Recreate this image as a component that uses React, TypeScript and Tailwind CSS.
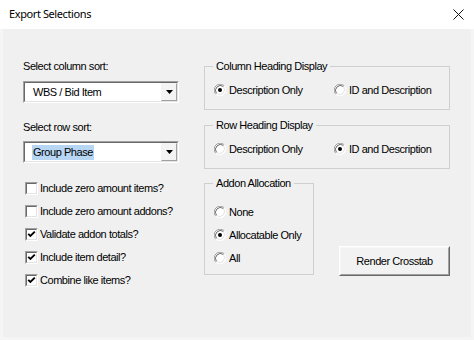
import React from "react";

function Radio({ checked }: { checked?: boolean }) {
  return (
    <svg width="12" height="12" viewBox="0 0 12 12" className="shrink-0">
      <circle cx="6" cy="6" r="5.5" fill="#ffffff" />
      <path d="M10.24 1.76 A6 6 0 0 0 1.76 10.24" stroke="#a0a0a0" strokeWidth="1" fill="none" />
      <path d="M9.5 2.5 A5 5 0 0 0 2.5 9.5" stroke="#696969" strokeWidth="1" fill="none" />
      <path d="M1.76 10.24 A6 6 0 0 0 10.24 1.76" stroke="#ffffff" strokeWidth="1" fill="none" />
      <path d="M2.5 9.5 A5 5 0 0 0 9.5 2.5" stroke="#e3e3e3" strokeWidth="1" fill="none" />
      {checked && <circle cx="6" cy="6" r="2" fill="#000000" />}
    </svg>
  );
}

function Checkbox({ checked }: { checked?: boolean }) {
  return (
    <div className="w-[13px] h-[13px] shrink-0 border border-t-[#a0a0a0] border-l-[#a0a0a0] border-b-white border-r-white">
      <div className="w-full h-full bg-white border border-t-[#696969] border-l-[#696969] border-b-[#e3e3e3] border-r-[#e3e3e3] flex items-center justify-center">
        {checked && (
          <svg width="9" height="9" viewBox="0 0 9 9">
            <path d="M1.2 3.8 L3.4 6 L7.8 1.6" stroke="#000" strokeWidth="1.9" fill="none" />
          </svg>
        )}
      </div>
    </div>
  );
}

function Combo({ value, selected }: { value: string; selected?: boolean }) {
  return (
    <div className="w-[156px] h-[22px] border border-t-[#a0a0a0] border-l-[#a0a0a0] border-b-white border-r-white">
      <div className="w-full h-full bg-white border border-t-[#696969] border-l-[#696969] border-b-[#e3e3e3] border-r-[#e3e3e3] flex items-center justify-between">
        <span className={"ml-[7px] px-[1px] leading-[15px] whitespace-nowrap " + (selected ? "bg-[#b7d6f3]" : "")}>{value}</span>
        <div className="w-[16px] h-[18px] bg-[#f4f4f4] border border-t-[#f4f4f4] border-l-[#f4f4f4] border-b-[#a0a0a0] border-r-[#a0a0a0] flex items-center justify-center">
          <svg width="7" height="4" viewBox="0 0 7 4">
            <path d="M0 0 H7 L3.5 4 Z" fill="#000" />
          </svg>
        </div>
      </div>
    </div>
  );
}

function CheckRow({ label, checked }: { label: string; checked?: boolean }) {
  return (
    <div className="h-[23px] flex items-center pl-[2px] gap-[2px] whitespace-nowrap">
      <Checkbox checked={checked} />
      <span>{label}</span>
    </div>
  );
}

function RadioItem({ label, checked, w }: { label: string; checked?: boolean; w?: string }) {
  return (
    <div className={"flex items-center gap-[3px] whitespace-nowrap " + (w || "")}>
      <Radio checked={checked} />
      <span className="leading-[14px]">{label}</span>
    </div>
  );
}

export default function App() {
  return (
    <div
      className="w-[474px] h-[340px] flex flex-col bg-[#f5f5f5] text-black text-[11px] tracking-[-0.45px] overflow-hidden"
      style={{ fontFamily: '"Liberation Sans", Arial, sans-serif' }}
    >
      <div className="h-[29px] bg-white flex items-center justify-between pl-[9px] pr-[9px] shrink-0">
        <span className="text-[11px] tracking-[-0.4px]" style={{ fontFamily: '"Noto Sans", "Open Sans", sans-serif' }}>
          Export Selections
        </span>
        <svg width="11" height="11" viewBox="0 0 11 11" className="mr-[1px]">
          <path d="M0.5 0.5 L10.5 10.5 M10.5 0.5 L0.5 10.5" stroke="#111" strokeWidth="1" />
        </svg>
      </div>
      <div className="flex-1 mx-[3px] mb-[3px] bg-[#f0f0f0] flex pl-[20px] pt-[30px] gap-[25px]">
        <div className="w-[156px] flex flex-col">
          <div className="leading-[14px]">Select column sort:</div>
          <div className="mt-[8px]">
            <Combo value="WBS / Bid Item" />
          </div>
          <div className="leading-[14px] mt-[17px]">Select row sort:</div>
          <div className="mt-[7px]">
            <Combo value="Group Phase" selected />
          </div>
          <div className="mt-[14px] flex flex-col">
            <CheckRow label="Include zero amount items?" />
            <CheckRow label="Include zero amount addons?" />
            <CheckRow label="Validate addon totals?" checked />
            <CheckRow label="Include item detail?" checked />
            <CheckRow label="Combine like items?" checked />
          </div>
        </div>
        <div className="w-[246px] flex flex-col">
          <fieldset className="border border-[#cfcfcf] pl-[9px] pt-[10px] pb-[12px]">
            <legend className="ml-[-1px] px-[3px] leading-[14px]">Column Heading Display</legend>
            <div className="flex items-center">
              <RadioItem label="Description Only" checked w="w-[120px]" />
              <RadioItem label="ID and Description" />
            </div>
          </fieldset>
          <fieldset className="mt-[8px] border border-[#cfcfcf] pl-[9px] pt-[10px] pb-[12px]">
            <legend className="ml-[-1px] px-[3px] leading-[14px]">Row Heading Display</legend>
            <div className="flex items-center">
              <RadioItem label="Description Only" w="w-[120px]" />
              <RadioItem label="ID and Description" checked />
            </div>
          </fieldset>
          <div className="mt-[7px] flex items-end gap-[25px]">
            <fieldset className="w-[110px] border border-[#cfcfcf] pl-[9px] pt-[10px] pb-[5px]">
              <legend className="ml-[-1px] px-[3px] leading-[14px]">Addon Allocation</legend>
              <div className="flex flex-col">
                <div className="h-[23px] flex items-center"><RadioItem label="None" /></div>
                <div className="h-[23px] flex items-center"><RadioItem label="Allocatable Only" checked /></div>
                <div className="h-[23px] flex items-center"><RadioItem label="All" /></div>
              </div>
            </fieldset>
            <button className="w-[111px] h-[30px] mb-[-1px] border border-t-white border-l-white border-b-[#696969] border-r-[#696969]">
              <div className="w-full h-full bg-[#f2f2f2] border border-t-[#f8f8f8] border-l-[#f8f8f8] border-b-[#a0a0a0] border-r-[#a0a0a0] flex items-center justify-center">
                Render Crosstab
              </div>
            </button>
          </div>
        </div>
      </div>
    </div>
  );
}
